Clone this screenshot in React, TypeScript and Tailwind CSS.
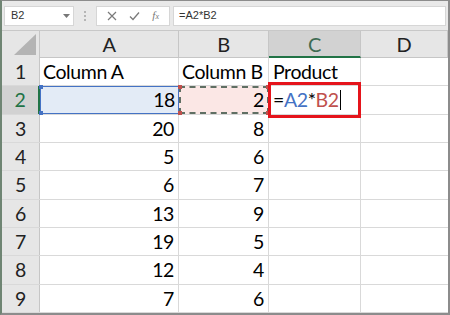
import React from "react";

const cols = ["A", "B", "C", "D"];
const colW = ["w-[139px]", "w-[90px]", "w-[92px]", "w-[87px]"];

const data: [string, string][] = [
  ["20", "8"],
  ["5", "6"],
  ["6", "7"],
  ["13", "9"],
  ["19", "5"],
  ["12", "4"],
  ["7", "6"],
];

const font = { fontFamily: "Lato, 'Open Sans', sans-serif" };

const Corner = ({ c, pos }: { c: string; pos: string }) => (
  <span className={`absolute w-[4px] h-[4px] ${c} ${pos}`} />
);

const App = () => {
  return (
    <div
      className="w-[450px] h-[315px] bg-white border-2 border-t border-[#8c8c8c] border-l-[#6f8573] overflow-hidden flex flex-col"
      style={font}
    >
      {/* formula bar */}
      <div className="h-[29px] bg-[#e9e9e9] flex items-center px-[2px] shrink-0">
        <div className="w-[70px] h-[20px] bg-white border border-[#d6d6d6] flex items-center justify-between pl-[6px] pr-[3px] text-[11px] text-[#333]">
          <span style={{ fontFamily: "'Liberation Sans', sans-serif" }}>B2</span>
          <svg width="7" height="4" viewBox="0 0 7 4">
            <path d="M0 0h7L3.5 4z" fill="#777" />
          </svg>
        </div>
        <div className="w-[22px] flex flex-col items-center gap-[2px]">
          <span className="w-[2px] h-[2px] bg-[#b5b5b5]" />
          <span className="w-[2px] h-[2px] bg-[#b5b5b5]" />
          <span className="w-[2px] h-[2px] bg-[#b5b5b5]" />
        </div>
        <div className="w-[74px] h-[20px] bg-white border border-[#d6d6d6] flex items-center justify-around px-[4px]">
          <svg width="10" height="10" viewBox="0 0 10 10">
            <path d="M1 1l8 8M9 1l-8 8" stroke="#7a7a7a" strokeWidth="1.2" />
          </svg>
          <svg width="11" height="10" viewBox="0 0 11 10">
            <path d="M1 5.5l3 3 6-7" stroke="#7a7a7a" strokeWidth="1.3" fill="none" />
          </svg>
          <span
            className="text-[11px] italic text-[#777] leading-none"
            style={{ fontFamily: "'Liberation Serif', serif" }}
          >
            f<span className="text-[8px]">x</span>
          </span>
        </div>
        <div
          className="ml-[3px] flex-1 h-[20px] bg-white border border-[#d6d6d6] flex items-center pl-[5px] text-[11px] text-[#333]"
          style={{ fontFamily: "'Liberation Sans', sans-serif" }}
        >
          =A2*B2
        </div>
      </div>

      {/* column headers */}
      <div className="flex h-[28px] shrink-0 bg-[#e6e6e6] border-t border-[#c8c8c8] text-[20px] leading-none tracking-[-0.3px]">
        <div className="w-[38px] border-r border-[#c6c6c6] relative">
          <svg className="absolute right-[3px] bottom-[3px]" width="22" height="21" viewBox="0 0 22 21">
            <path d="M22 0v21H0z" fill="#b4b4b4" />
          </svg>
        </div>
        {cols.map((c, i) => (
          <div
            key={c}
            className={`${colW[i]} flex items-center justify-center border-r border-[#c6c6c6] ${
              c === "C"
                ? "bg-[#d2d2d2] text-[#3e6b52] border-b-2 border-b-[#217346]"
                : "text-[#222] border-b border-b-[#c6c6c6]"
            }`}
          >
            {c}
          </div>
        ))}
      </div>

      {/* rows */}
      <div className="grid grid-rows-[repeat(9,28.33px)] text-[19.5px] leading-none tracking-[-0.4px] text-black">
        {/* row 1 */}
        <div className="flex border-b border-[#d9d9d9]">
          <div className="w-[38px] bg-[#e6e6e6] border-r border-[#c6c6c6] flex items-center justify-center text-[#222]">1</div>
          <div className={`${colW[0]} border-r border-[#d9d9d9] flex items-center pl-[3px]`}>Column A</div>
          <div className={`${colW[1]} border-r border-[#d9d9d9] flex items-center pl-[3px] whitespace-nowrap`}>Column B</div>
          <div className={`${colW[2]} border-r border-[#d9d9d9] flex items-center pl-[4px]`}>Product</div>
          <div className={`${colW[3]}`} />
        </div>

        {/* row 2 */}
        <div className="flex border-b border-[#d9d9d9]">
          <div className="w-[38px] bg-[#d2d2d2] border-r-2 border-[#217346] flex items-center justify-center text-[#217346]">2</div>
          <div className={`${colW[0]} relative bg-[#e3ebf6] border-[1.5px] border-[#4472c4] flex items-center justify-end pr-[3px]`}>
            18
            <Corner c="bg-[#4472c4]" pos="-left-[2px] -top-[2px]" />
            <Corner c="bg-[#4472c4]" pos="-left-[2px] -bottom-[2px]" />
          </div>
          <div className={`${colW[1]} relative bg-[#fbe7e5] border-2 border-dashed border-[#5f6f63] flex items-center justify-end pr-[3px]`}>
            2
            <Corner c="bg-[#c0504d]" pos="-left-[3px] -top-[3px]" />
            <Corner c="bg-[#c0504d]" pos="-left-[3px] -bottom-[3px]" />
            <Corner c="bg-[#c0504d]" pos="-right-[3px] -top-[3px]" />
            <Corner c="bg-[#c0504d]" pos="-right-[3px] -bottom-[3px]" />
          </div>
          <div className={`${colW[2]} relative border-r border-[#d9d9d9] flex items-center pl-[4px]`}>
            <span>=</span>
            <span className="text-[#4472c4]">A2</span>
            <span>*</span>
            <span className="text-[#c0504d]">B2</span>
            <span className="w-[1px] h-[20px] bg-black ml-[1px]" />
            <div className="absolute -left-[1px] -top-[4px] -right-[1px] -bottom-[4px] border-[3px] border-[#e5141b]" />
          </div>
          <div className={`${colW[3]}`} />
        </div>

        {data.map(([a, b], i) => (
          <div key={i} className="flex border-b border-[#d9d9d9]">
            <div className="w-[38px] bg-[#e6e6e6] border-r border-[#c6c6c6] flex items-center justify-center text-[#222]">
              {i + 3}
            </div>
            <div className={`${colW[0]} border-r border-[#d9d9d9] flex items-center justify-end pr-[4px]`}>{a}</div>
            <div className={`${colW[1]} border-r border-[#d9d9d9] flex items-center justify-end pr-[4px]`}>{b}</div>
            <div className={`${colW[2]} border-r border-[#d9d9d9]`} />
            <div className={`${colW[3]}`} />
          </div>
        ))}
      </div>
    </div>
  );
};

export default App;
